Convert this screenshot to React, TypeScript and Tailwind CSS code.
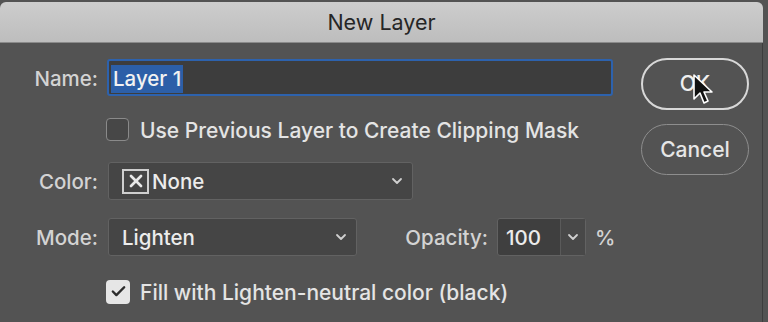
import { Check, X } from 'lucide-react'

function Chevron() {
    return (
        <svg width="12" height="8" viewBox="0 0 12 8" className="shrink-0">
            <polyline points="2,2 6,6 10,2" fill="none" stroke="#d0d0d0" strokeWidth="1.8" strokeLinecap="round" strokeLinejoin="round" />
        </svg>
    )
}

function Cursor() {
    return (
        <svg width="22" height="32" viewBox="0 0 22 32" className="absolute left-[692px] top-[73px]">
            <path d="M2 2 L2 26 L8 20 L12 30 L16 28 L12 19 L20 19 Z" fill="#111" stroke="#fff" strokeWidth="1.6" strokeLinejoin="round" />
        </svg>
    )
}

export default function App() {
    const font = { fontFamily: 'Inter, "Liberation Sans", sans-serif' }

    return (
        <div className="relative w-[768px] h-[322px] overflow-hidden bg-[#535353] flex flex-col" style={font}>
            {/* Title bar */}
            <div className="h-[41px] shrink-0 mt-[2px] mr-[5px] rounded-t-[6px] bg-gradient-to-b from-[#cdcdcd] to-[#bdbdbd] border-b border-[#8a8a8a] flex items-center justify-center">
                <span className="text-[21.5px] text-[#262626]">New Layer</span>
            </div>

            <div className="flex flex-1 mr-[5px] border-r border-[#3d3d3d]">
                {/* Form */}
                <div className="flex flex-col pt-[16px] w-[636px] font-medium">
                    {/* Name */}
                    <div className="flex items-center h-[37px]">
                        <span className="w-[98px] pt-[3px] text-right text-[20.5px] text-[#d3d3d3]">Name:</span>
                        <div className="ml-[9px] w-[506px] h-full rounded-[3px] border-2 border-[#2d62ad] bg-[#3d3d3d] flex items-center pl-[2px] pt-[2px]">
                            <span className="bg-[#2c5fa8] text-[20.5px] text-[#f2f2f2] px-[2px] leading-[28px]">Layer 1</span>
                        </div>
                    </div>

                    {/* Clipping mask */}
                    <div className="flex items-center h-[23px] mt-[22px] pl-[106px]">
                        <div className="w-[23px] h-[23px] rounded-[4px] border border-[#8a8a8a] bg-[#474747]" />
                        <span className="ml-[11px] pt-[3px] text-[21px] text-[#e4e4e4]">Use Previous Layer to Create Clipping Mask</span>
                    </div>

                    {/* Color */}
                    <div className="flex items-center h-[38px] mt-[21px]">
                        <span className="w-[98px] pt-[3px] text-right text-[20.5px] text-[#d3d3d3]">Color:</span>
                        <div className="ml-[10px] w-[305px] h-full rounded-[3px] border border-[#626262] bg-[#454545] flex items-center pl-[13px] pr-[9px]">
                            <div className="w-[27px] h-[25px] border-2 border-[#cfcfcf] flex items-center justify-center">
                                <X size={20} strokeWidth={3.2} color="#e8e8e8" />
                            </div>
                            <span className="ml-[3px] pt-[3px] text-[20.5px] text-[#ececec]">None</span>
                            <div className="flex-1" />
                            <Chevron />
                        </div>
                    </div>

                    {/* Mode + Opacity */}
                    <div className="flex items-center h-[38px] mt-[18px]">
                        <span className="w-[98px] pt-[3px] text-right text-[20.5px] text-[#d3d3d3]">Mode:</span>
                        <div className="ml-[10px] w-[249px] h-full rounded-[3px] border border-[#626262] bg-[#454545] flex items-center pl-[13px] pr-[9px]">
                            <span className="pt-[3px] text-[20.5px] text-[#ececec]">Lighten</span>
                            <div className="flex-1" />
                            <Chevron />
                        </div>
                        <span className="w-[131px] pt-[3px] text-right text-[20.5px] text-[#d3d3d3]">Opacity:</span>
                        <div className="ml-[9px] h-full flex rounded-[3px] border border-[#626262] bg-[#3f3f3f]">
                            <div className="w-[62px] flex items-center pl-[8px] pt-[3px] text-[20.5px] text-[#ececec]">100</div>
                            <div className="w-[25px] border-l border-[#5a5a5a] bg-[#484848] flex items-center justify-center">
                                <Chevron />
                            </div>
                        </div>
                        <span className="ml-[9px] pt-[3px] text-[20.5px] text-[#d3d3d3]">%</span>
                    </div>

                    {/* Fill */}
                    <div className="flex items-center h-[25px] mt-[23px] pl-[106px]">
                        <div className="w-[24px] h-[24px] rounded-[4px] bg-[#e6e6e6] flex items-center justify-center">
                            <Check size={17} strokeWidth={3.4} color="#2c2c2c" />
                        </div>
                        <span className="ml-[10px] pt-[3px] text-[21px] text-[#e4e4e4]">Fill with Lighten-neutral color (black)</span>
                    </div>
                </div>

                {/* Buttons */}
                <div className="flex flex-col pt-[15px] pl-[5px] font-medium">
                    <button className="w-[108px] h-[52px] rounded-full border-2 border-[#d8d8d8] text-[21px] text-[#efefef]">OK</button>
                    <button className="mt-[14px] w-[108px] h-[51px] rounded-full border border-[#8e8e8e] text-[21px] text-[#e6e6e6]">Cancel</button>
                </div>
            </div>

            <Cursor />
        </div>
    )
}
